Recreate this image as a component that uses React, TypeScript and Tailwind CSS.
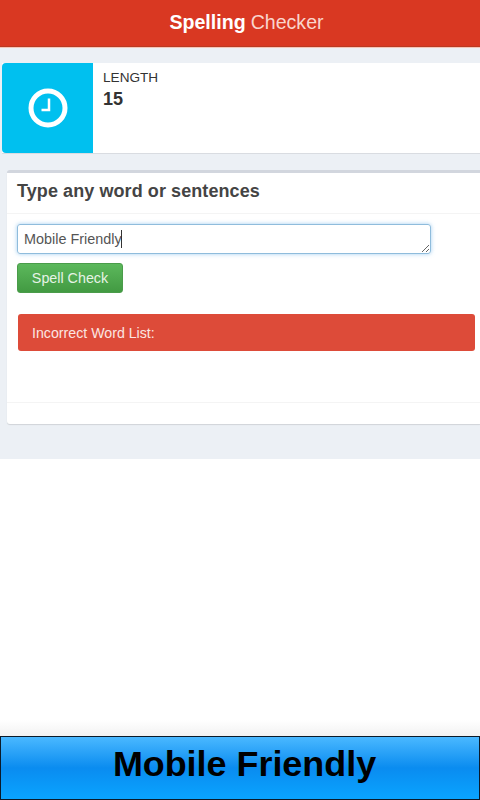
export default function App() {
  return (
    <div className="flex h-[800px] w-[480px] flex-col overflow-hidden bg-white font-['Liberation_Sans',Arial,sans-serif] text-[#333]">
      <header className="flex h-[47px] items-center justify-center border-b border-b-[#b93a22] bg-[#d93822] pl-[13px] text-[19.6px] text-white">
        <b>Spelling</b>
        <span className="ml-[5px] font-light text-[#f9d5cd]">Checker</span>
      </header>

      <main className="h-[412px] border-t border-t-[#f6c4b8] bg-[#ecf0f5] pl-[2px] pt-[15px]">
        <div className="flex h-[91px] border-b border-b-[#d9dce1] bg-white">
          <div className="flex w-[91px] items-center justify-center rounded-l-sm bg-[#00c0ef]">
            {/* clock hands meet to the right of and below the centre */}
            <svg width="40" height="40" viewBox="0 0 40 40" fill="none" stroke="white">
              <circle cx="20" cy="20" r="17" strokeWidth="5" />
              <path d="M21 10.5V22H13.5" strokeWidth="2.5" />
            </svg>
          </div>
          <div className="pl-[10px] pt-[6px]">
            <div className="text-[13.6px] leading-[17px]">LENGTH</div>
            <div className="mt-[2px] text-[18px] font-bold leading-[22px]">15</div>
          </div>
        </div>

        <section className="ml-[5px] mt-[16px] h-[254px] rounded-l-[3px] border-t-[3px] border-t-[#d2d6de] bg-white shadow-[0_1px_1px_rgba(0,0,0,0.12)]">
          <h3 className="flex h-[41px] items-center border-b border-b-[#f4f4f4] pb-[4px] pl-[10px] text-[18px] font-bold tracking-[0.08px] text-[#444]">
            Type any word or sentences
          </h3>
          <div className="h-[189px] border-b border-b-[#f4f4f4] pl-[10px] pt-[10px]">
            <div className="relative h-[30px] w-[414px]">
              <textarea
                readOnly
                defaultValue="Mobile Friendly"
                className="block h-full w-full rounded-[3px] border border-[#8fbcdc] px-[6px] py-[5px] text-[14.4px] leading-[18px] text-[#555] shadow-[0_0_4px_rgba(102,175,233,0.6)] outline-none"
              />
              <span className="absolute left-[104px] top-[6px] h-[18px] w-px bg-[#333]" />
            </div>
            <button className="mt-[9px] block h-[30px] w-[106px] rounded-[3px] border border-[#4a9c4a] bg-gradient-to-b from-[#5cb85c] to-[#429a42] pt-[2px] text-[14.3px] text-[#e6f3e6]">
              Spell Check
            </button>
            <div className="ml-px mt-[21px] flex h-[37px] w-[457px] items-center rounded-[3px] bg-[#dd4b39] pl-[14px] pt-[3px] text-[14.2px] text-[#fbe5e2]">
              Incorrect Word List:
            </div>
          </div>
        </section>
      </main>

      <div className="mt-auto h-[16px] bg-gradient-to-b from-white to-[#f2f2f2]" />
      <footer className="flex h-[64px] items-center justify-center border border-[#0a1a2a] bg-[linear-gradient(to_bottom,#4ab8ff_0%,#0a8cf0_50%,#0aa4ff_100%)] pb-[7px] pl-[9px] text-[35.9px] font-bold text-black">
        Mobile Friendly
      </footer>
    </div>
  );
}
